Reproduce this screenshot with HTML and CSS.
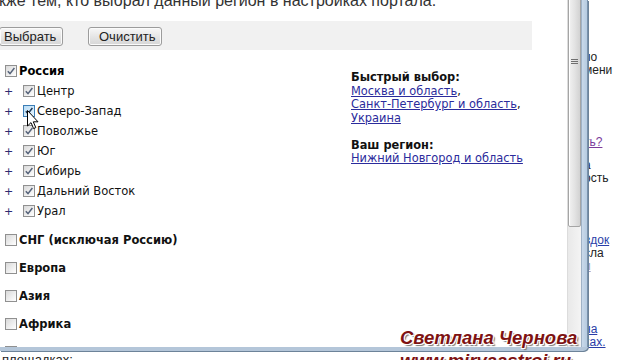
FILE: index.html
```html
<!DOCTYPE html>
<html lang="ru">
<head>
<meta charset="utf-8">
<title>Выбор региона</title>
<link rel="stylesheet" href="styles.css">
</head>
<body>
<div class="screen">
  <div class="top">
    <div class="dialog">
      <div class="client">
        <div class="intro">Также тем, кто выбрал данный регион в настройках портала.</div>
        <div class="toolbar">
          <button class="btn btn-first">Выбрать</button>
          <button class="btn">Очистить</button>
        </div>
        <div class="main">
          <div class="tree">
            <div class="row root"><span class="cb on"><svg viewBox="0 0 10 10"><path d="M1.8 5.2 L4 7.6 L8.4 2"/></svg></span><b>Россия</b></div>
            <div class="children">
              <div class="row child"><span class="plus">+</span><span class="cb on"><svg viewBox="0 0 10 10"><path d="M1.8 5.2 L4 7.6 L8.4 2"/></svg></span><span class="lbl">Центр</span></div>
              <div class="row child"><span class="plus">+</span><span class="cb on hover"><svg viewBox="0 0 10 10"><path d="M1.8 5.2 L4 7.6 L8.4 2"/></svg></span><span class="lbl">Северо-Запад</span></div>
              <div class="row child"><span class="plus">+</span><span class="cb on"><svg viewBox="0 0 10 10"><path d="M1.8 5.2 L4 7.6 L8.4 2"/></svg></span><span class="lbl">Поволжье</span></div>
              <div class="row child"><span class="plus">+</span><span class="cb on"><svg viewBox="0 0 10 10"><path d="M1.8 5.2 L4 7.6 L8.4 2"/></svg></span><span class="lbl">Юг</span></div>
              <div class="row child"><span class="plus">+</span><span class="cb on"><svg viewBox="0 0 10 10"><path d="M1.8 5.2 L4 7.6 L8.4 2"/></svg></span><span class="lbl">Сибирь</span></div>
              <div class="row child"><span class="plus">+</span><span class="cb on"><svg viewBox="0 0 10 10"><path d="M1.8 5.2 L4 7.6 L8.4 2"/></svg></span><span class="lbl">Дальний Восток</span></div>
              <div class="row child"><span class="plus">+</span><span class="cb on"><svg viewBox="0 0 10 10"><path d="M1.8 5.2 L4 7.6 L8.4 2"/></svg></span><span class="lbl">Урал</span></div>
            </div>
            <div class="groups">
              <div class="group"><span class="cb"></span><b>СНГ (исключая Россию)</b></div>
              <div class="group"><span class="cb"></span><b>Европа</b></div>
              <div class="group"><span class="cb"></span><b>Азия</b></div>
              <div class="group"><span class="cb"></span><b>Африка</b></div>
              <div class="group"><span class="cb"></span><b>Америка</b></div>
            </div>
          </div>
          <div class="quick">
            <div class="qtitle">Быстрый выбор:</div>
            <div><a href="#">Москва и область</a>,</div>
            <div><a href="#">Санкт-Петербург и область</a>,</div>
            <div><a href="#">Украина</a></div>
            <div class="qtitle qgap">Ваш регион:</div>
            <div><a href="#">Нижний Новгород и область</a></div>
          </div>
        </div>
      </div>
      <div class="scrollbar">
        <div class="thumb"><span class="grip"></span></div>
      </div>
      <div class="frame-right"></div>
    </div>
    <div class="side">
      <div class="s1">по</div>
      <div>мени</div>
      <div class="s2"><a class="visited" href="#">ть?</a></div>
      <div class="s3">а</div>
      <div>ость</div>
      <div class="s4"><a href="#">вдок</a></div>
      <div>сла</div>
      <div><a class="faint" href="#">и</a></div>
      <div class="s5"><a href="#">на</a></div>
      <div><a href="#">ках.</a></div>
    </div>
  </div>
  <div class="below">площадках:</div>

  <svg class="cursor" viewBox="0 0 12 20" width="12" height="20"><path d="M0.5 0.5 L0.5 16 L4 12.6 L6.6 18.6 L8.8 17.6 L6.3 11.8 L11 11.8 Z" fill="#fff" stroke="#000" stroke-width="1"/></svg>

  <div class="watermark">
    <div class="wm1">Светлана Чернова</div>
    <div class="wm2">www.mirvaastroi.ru</div>
  </div>
</div>
</body>
</html>
```
FILE: styles.css
```css
* { box-sizing: border-box; margin: 0; padding: 0; }
html, body { width: 640px; height: 360px; overflow: hidden; background: #fff; }
body { font-family: "DejaVu Sans", Verdana, sans-serif; color: #000; }

.screen { position: relative; width: 640px; height: 360px; overflow: hidden; }

.top { display: flex; height: 351px; }

.dialog {
  position: relative;
  z-index: 1;
  display: flex;
  flex: 0 0 588px;
  height: 351px;
  background: #fff;
  border-bottom: 4px solid #b4c6d9;
  border-bottom-right-radius: 5px;
  box-shadow: 1px 1px 0 #6d8399;
}

.client { flex: 0 0 567px; overflow: hidden; }

.intro {
  margin-top: -9px;
  height: 20px;
  line-height: 20px;
  margin-left: -19px;
  font-family: "Liberation Sans", Arial, sans-serif;
  font-size: 16px;
  color: #333;
  white-space: nowrap;
}

.toolbar {
  margin-top: 10px;
  width: 532px;
  height: 29px;
  background: #f1f1f1;
  display: flex;
  align-items: flex-start;
  padding-top: 6px;
  gap: 25px;
}

.btn {
  height: 19px;
  padding: 0 9px 0 4px;
  font-family: "Liberation Sans", Arial, sans-serif;
  font-size: 13px;
  color: #222;
  background: linear-gradient(#f7f7f7, #e4e4e4 55%, #d6d6d6);
  border: 1px solid #9c9c9c;
  border-radius: 3px;
  box-shadow: inset 0 0 0 1px #fbfbfb;
}
.btn-first { margin-left: -1px; width: 64px; }
.btn + .btn { width: 74px; padding: 0 10px; }

.main { display: flex; }

.tree { flex: 0 0 351px; padding-top: 11px; font-size: 11.5px; }

.row { display: flex; align-items: center; height: 20px; }
.root { padding-left: 5px; gap: 2px; }
.root b { font-weight: bold; }
.child { padding-left: 3px; }
.plus { width: 20px; font-size: 11px; color: #2b2b70; padding-left: 1px; }
.child .cb { margin-right: 2px; }
.lbl { color: #111; }

.cb {
  flex: 0 0 12px;
  width: 12px;
  height: 12px;
  border: 1px solid #909090;
  background: linear-gradient(135deg, #d9d9d9, #f4f4f4 70%, #fff);
  display: inline-flex;
  align-items: center;
  justify-content: center;
}
.cb svg { width: 10px; height: 10px; }
.cb svg path { fill: none; stroke: #56637a; stroke-width: 1.5; }
.cb.hover { border-color: #3b7db5; background: linear-gradient(135deg, #b9dcf5, #e6f4fd); }
.cb.hover svg path { stroke: #1d3553; }

.groups { padding-top: 5px; }
.group { display: flex; align-items: center; gap: 2px; height: 28px; padding-left: 5px; }
.group b { font-weight: bold; color: #111; }

.quick { padding-top: 21px; font-size: 11.4px; line-height: 13.5px; color: #111; }
.qtitle { font-weight: bold; }
.qgap { margin-top: 13.5px; }
.quick a { color: #2b2b9c; text-decoration: underline; }

.scrollbar {
  flex: 0 0 14px;
  background: linear-gradient(90deg, #e9e9e9, #f4f4f4);
  border-left: 1px solid #dcdcdc;
}
.thumb {
  height: 230px;
  margin: -3px 0 0 0;
  border: 1px solid #a5a5a5;
  border-radius: 2px;
  background: linear-gradient(90deg, #f2f2f2, #e2e2e2 55%, #d2d2d2);
  box-shadow: inset 1px 0 0 #fff;
  display: flex;
  justify-content: center;
  padding-top: 61px;
}
.grip {
  width: 7px;
  height: 6px;
  background: repeating-linear-gradient(#6f6f6f 0 1px, transparent 1px 2px);
}

.frame-right {
  flex: 0 0 7px;
  background: linear-gradient(90deg, #c9d9ea, #b6cbe0);
  border-left: 1px solid #9fb2c6;
  border-right: 1px solid #7891ab;
}

.side {
  margin-left: -4px;
  position: relative;
  z-index: 0;
  font-family: "Liberation Sans", Arial, sans-serif;
  font-size: 12px;
  line-height: 13px;
  color: #222;
  padding-top: 51px;
  white-space: nowrap;
}
.side a { color: #2a3ea8; text-decoration: underline; }
.side a.visited { color: #7b3c9c; }
.side a.faint { color: #9da3cc; }
.s2 { margin-top: 59px; }
.s3 { margin-top: 10px; }
.s4 { margin-top: 49px; }
.s5 { margin-top: 50px; }

.below {
  font-family: "Liberation Sans", Arial, sans-serif;
  font-size: 13px;
  line-height: 16px;
  color: #222;
  padding-left: 2px;
  margin-top: 1px;
}

.cursor { position: absolute; z-index: 5; left: 27px; top: 110px; }

.watermark {
  position: absolute;
  z-index: 5;
  left: 400px;
  top: 328px;
  font-family: "Liberation Sans", Arial, sans-serif;
  font-weight: bold;
  font-style: italic;
  color: #7e1212;
  text-shadow: -1px -1px 0 #fff, 1px -1px 0 #fff, -1px 1px 0 #fff, 1px 1px 0 #fff, 2px 2px 1px #777;
  line-height: 20px;
}
.wm1 { font-size: 18.5px; }
.wm2 { font-size: 18.5px; margin-top: 3px; }
```
